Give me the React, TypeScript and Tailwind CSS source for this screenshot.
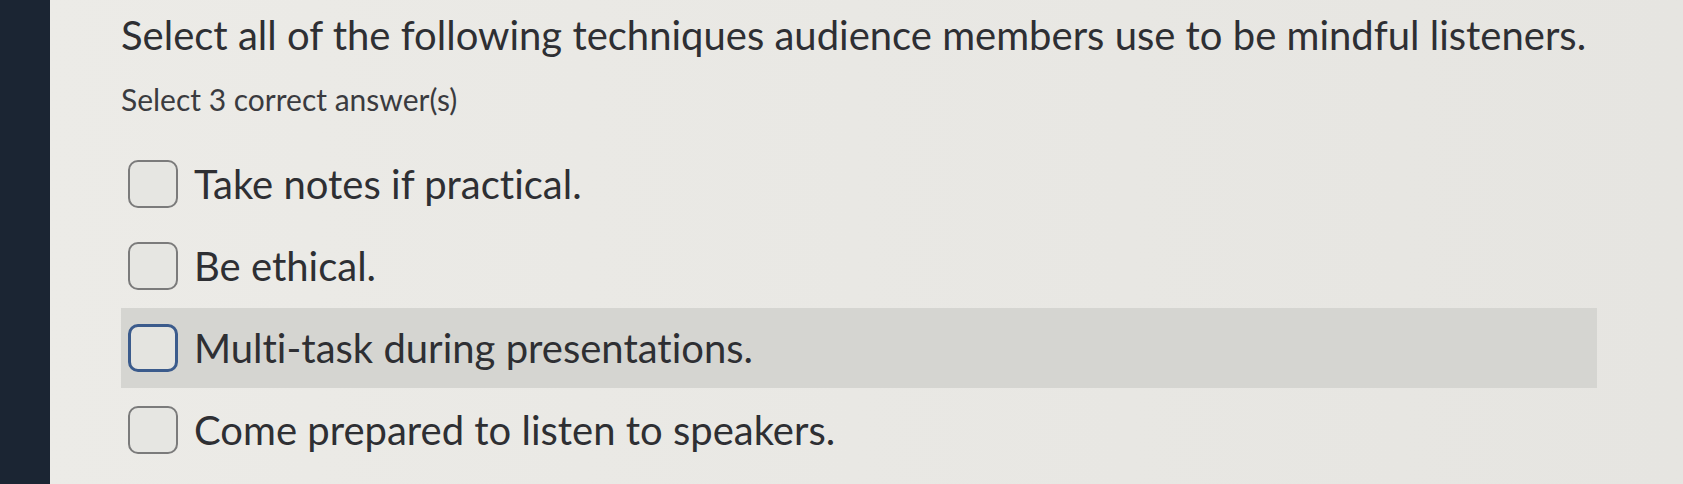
import React from "react";

const options = [
  { label: "Take notes if practical.", active: false },
  { label: "Be ethical.", active: false },
  { label: "Multi-task during presentations.", active: true },
  { label: "Come prepared to listen to speakers.", active: false },
];

export default function App() {
  return (
    <div className="flex h-[484px] w-[1683px] overflow-hidden bg-[#e8e7e3] font-['Lato','Open_Sans',sans-serif] text-[#2e2f33] [font-variant-ligatures:none]">
      <div className="w-[50px] shrink-0 bg-[#1b2533]" />
      <div className="flex flex-1 flex-col bg-gradient-to-r from-[#ecebe7] to-[#e6e5e1] pl-[71px] pt-[11px]">
        <h1 className="text-[40px] leading-[48px] font-normal">
          Select all of the following techniques audience members use to be mindful listeners.
        </h1>
        <p className="mt-[22px] text-[30px] leading-[36px] text-[#3a3b3f]">Select 3 correct answer(s)</p>
        <div className="mt-[27px] flex flex-col gap-[2px]">
          {options.map(o => (
            <label
              key={o.label}
              className={`flex h-[80px] w-[1476px] items-center gap-[16px] pl-[7px] ${o.active ? "bg-[#d5d5d1]" : ""}`}
            >
              <span
                className={`h-[48px] w-[50px] shrink-0 rounded-[10px] ${
                  o.active ? "border-[3px] border-[#3b5b8c] bg-[#e4e4e0]" : "border-2 border-[#7b7b7b] bg-[#e6e6e2]"
                }`}
              />
              <span className="text-[40px] leading-[48px]">{o.label}</span>
            </label>
          ))}
        </div>
      </div>
    </div>
  );
}
